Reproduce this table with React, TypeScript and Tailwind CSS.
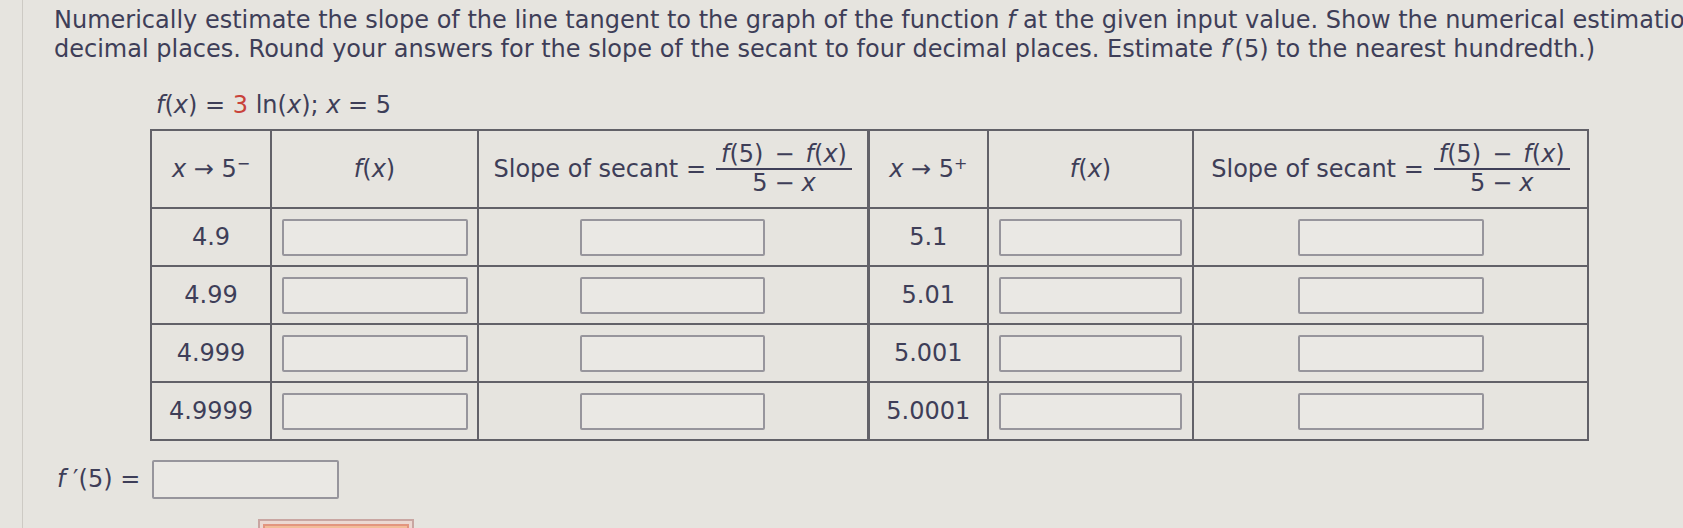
import React from "react"

const rowsLeft = ["4.9", "4.99", "4.999", "4.9999"]
const rowsRight = ["5.1", "5.01", "5.001", "5.0001"]

function AnswerBox({ w = "w-[186px]" }: { w?: string }) {
  return (
    <div className={`${w} h-[37px] mx-auto border-2 border-[#97959c] rounded-[2px] bg-[#eae8e4]`} />
  )
}

function Fraction() {
  return (
    <span className="inline-flex flex-col items-center align-middle ml-[10px]">
      <span className="border-b-2 border-[#3e3e58] px-[5px] leading-[27px]">
        <i>f</i>(5)<span className="mx-[11px]">−</span><i>f</i>(<i>x</i>)
      </span>
      <span className="leading-[27px]">
        5<span className="mx-[7px]">−</span><i>x</i>
      </span>
    </span>
  )
}

function SecantHeader() {
  return (
    <div className="flex items-center justify-center whitespace-nowrap">
      <span>Slope of secant =</span>
      <Fraction />
    </div>
  )
}

export default function App() {
  const cell = "border-2 border-[#626168] text-center align-middle"
  return (
    <div className="min-h-[528px] h-[528px] overflow-hidden bg-[#e6e4df] text-[#3e3e58] font-['DejaVu_Sans',sans-serif] text-[24px] leading-[29px]">
      <div className="ml-[22px] h-full border-l border-[#cdcac4] pl-[31px] pt-[6px]">
        {/* Question text */}
        <div className="whitespace-nowrap">
          Numerically estimate the slope of the line tangent to the graph of the function <i>f</i> at the given input value. Show the numerical estimation
        </div>
        <div className="whitespace-nowrap">
          decimal places. Round your answers for the slope of the secant to four decimal places. Estimate <i>f</i>′(5) to the nearest hundredth.)
        </div>

        <div className="mt-[27px] pl-[102px] whitespace-nowrap">
          <i>f</i>(<i>x</i>) = <span className="text-[#c9423a]">3</span> ln(<i>x</i>); <i>x</i> = 5
        </div>

        {/* Table */}
        <table className="mt-[9px] ml-[96px] table-fixed border-collapse w-[1437px]">
          <colgroup>
            <col className="w-[120px]" />
            <col className="w-[207px]" />
            <col className="w-[390px]" />
            <col className="w-[120px]" />
            <col className="w-[205px]" />
            <col className="w-[395px]" />
          </colgroup>
          <thead>
            <tr className="h-[78px]">
              <th className={`${cell} font-normal whitespace-nowrap`}>
                <i>x</i> → 5<sup className="text-[16px]">−</sup>
              </th>
              <th className={`${cell} font-normal`}>
                <i>f</i>(<i>x</i>)
              </th>
              <th className={`${cell} font-normal`}>
                <SecantHeader />
              </th>
              <th className={`${cell} border-l-[3px] font-normal whitespace-nowrap`}>
                <i>x</i> → 5<sup className="text-[16px]">+</sup>
              </th>
              <th className={`${cell} font-normal`}>
                <i>f</i>(<i>x</i>)
              </th>
              <th className={`${cell} font-normal`}>
                <SecantHeader />
              </th>
            </tr>
          </thead>
          <tbody>
            {rowsLeft.map((v, i) => (
              <tr key={v} className="h-[58px]">
                <td className={`${cell} whitespace-nowrap`}>{v}</td>
                <td className={cell}>
                  <AnswerBox w="w-[186px]" />
                </td>
                <td className={cell}>
                  <AnswerBox w="w-[185px]" />
                </td>
                <td className={`${cell} border-l-[3px] whitespace-nowrap`}>{rowsRight[i]}</td>
                <td className={cell}>
                  <AnswerBox w="w-[183px]" />
                </td>
                <td className={cell}>
                  <AnswerBox w="w-[186px]" />
                </td>
              </tr>
            ))}
          </tbody>
        </table>

        {/* f'(5) answer */}
        <div className="mt-[19px] flex items-center">
          <span className="ml-[3px] w-[95px] whitespace-nowrap">
            <i>f</i> ′(5) =
          </span>
          <div className="w-[187px] h-[39px] border-2 border-[#97959c] rounded-[2px] bg-[#eae8e4]" />
        </div>

        {/* Submit button (cut off) */}
        <div className="mt-[20px] ml-[204px] w-[156px] h-[40px] border-2 border-[#c9a6a2] bg-[#ecd8d2] p-[3px]">
          <div className="h-full border-2 border-[#e3957f] bg-[#f2bc98]" />
        </div>
      </div>
    </div>
  )
}
